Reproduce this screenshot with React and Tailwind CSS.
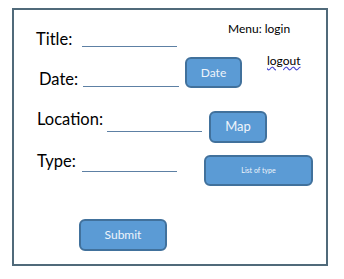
import React from "react";

const font = { fontFamily: "Lato, 'Liberation Sans', sans-serif" };

function Btn({ children, className = "", textClass = "text-[12px]" }) {
  return (
    <div
      className={`flex items-center justify-center rounded-[6px] border-2 border-[#41719c] bg-[#5b9bd5] text-[#eef4fb] ${textClass} ${className}`}
    >
      {children}
    </div>
  );
}

function Line({ className = "" }) {
  return <div className={`h-px bg-[#5d80a4] ${className}`} />;
}

export default function App() {
  return (
    <div className="w-[344px] h-[279px] bg-white pt-[8px] pl-[12px]" style={font}>
      <div className="w-[316px] h-[258px] border-2 border-[#506a7a] flex flex-col text-black">
        {/* Row A */}
        <div className="flex items-start h-[40px] shrink-0">
          <div className="ml-[22px] mt-[19px] w-[46px] text-[16.5px] leading-[20px]">Title:</div>
          <Line className="mt-[36px] w-[95px]" />
          <div className="ml-[51px] mt-[12px] text-[12px] leading-[14px]">Menu: login</div>
        </div>
        {/* Row B */}
        <div className="flex items-start h-[45px] shrink-0">
          <div className="ml-[25px] mt-[19px] w-[44px] text-[16.5px] leading-[20px]">Date:</div>
          <Line className="mt-[36px] w-[96px]" />
          <Btn className="ml-[6px] mt-[7px] w-[57px] h-[31px]">Date</Btn>
          <div className="ml-[25px] mt-[4px] text-[12px] leading-[14px] underline decoration-wavy decoration-[#4a4ad0] underline-offset-[1px]">
            logout
          </div>
        </div>
        {/* Row C */}
        <div className="flex items-start h-[53px] shrink-0">
          <div className="ml-[23px] mt-[14px] w-[70px] text-[16.5px] leading-[20px]">Location:</div>
          <Line className="mt-[36px] w-[95px]" />
          <Btn className="ml-[7px] mt-[16px] w-[58px] h-[32px]" textClass="text-[13px]">
            Map
          </Btn>
        </div>
        {/* Row D */}
        <div className="flex items-start h-[42px] shrink-0">
          <div className="ml-[23px] mt-[3px] w-[45px] text-[16.5px] leading-[20px]">Type:</div>
          <Line className="mt-[23px] w-[95px]" />
          <Btn className="ml-[27px] mt-[7px] w-[109px] h-[31px]" textClass="text-[7px]">
            List of type
          </Btn>
        </div>
        {/* Row E */}
        <div className="flex items-start shrink-0">
          <Btn className="ml-[65px] mt-[29px] w-[88px] h-[32px]" textClass="text-[12px]">
            Submit
          </Btn>
        </div>
      </div>
    </div>
  );
}
